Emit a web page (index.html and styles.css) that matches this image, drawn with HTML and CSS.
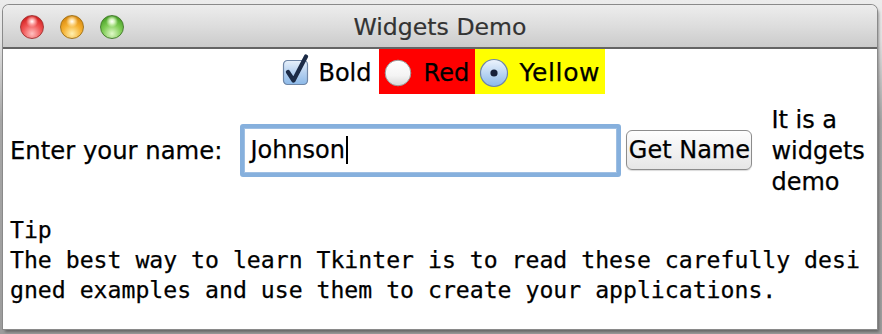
FILE: index.html
```html
<!DOCTYPE html>
<html>
<head>
<meta charset="utf-8">
<title>Widgets Demo</title>
<link rel="stylesheet" href="styles.css">
</head>
<body>
<div class="window">
  <div class="titlebar">
    <div class="lights">
      <span class="light red"></span>
      <span class="light orange"></span>
      <span class="light green"></span>
    </div>
    <div class="title">Widgets Demo</div>
  </div>
  <div class="content">
    <div class="row1">
      <label class="opt opt-bold">
        <svg class="check" width="28" height="32" viewBox="0 0 28 32">
          <defs>
            <linearGradient id="cbg" x1="0" y1="0" x2="0" y2="1">
              <stop offset="0" stop-color="#e8f1fb"/>
              <stop offset="0.5" stop-color="#b6d1f0"/>
              <stop offset="1" stop-color="#8cb9e8"/>
            </linearGradient>
          </defs>
          <rect x="1.5" y="6.5" width="24" height="24" rx="4" fill="url(#cbg)" stroke="#6f86a6" stroke-width="1.2"/>
          <path d="M6 18 L11.5 26.5 L24 2.5" fill="none" stroke="#1c2b46" stroke-width="4.2" stroke-linecap="round" stroke-linejoin="round"/>
        </svg>
        <span class="opt-text">Bold</span>
      </label>
      <label class="opt opt-red">
        <svg class="radio" width="28" height="28" viewBox="0 0 28 28">
          <defs>
            <linearGradient id="rw" x1="0" y1="0" x2="0" y2="1">
              <stop offset="0" stop-color="#ffffff"/>
              <stop offset="0.6" stop-color="#f4f4f4"/>
              <stop offset="1" stop-color="#d8d8d8"/>
            </linearGradient>
          </defs>
          <circle cx="14" cy="14" r="12.8" fill="url(#rw)" stroke="#9a9a9a" stroke-width="1"/>
        </svg>
        <span class="opt-text">Red</span>
      </label>
      <label class="opt opt-yellow">
        <svg class="radio" width="30" height="30" viewBox="0 0 30 30">
          <defs>
            <linearGradient id="rb" x1="0" y1="0" x2="0" y2="1">
              <stop offset="0" stop-color="#eef5fd"/>
              <stop offset="0.5" stop-color="#bcd6f2"/>
              <stop offset="1" stop-color="#8ab8ea"/>
            </linearGradient>
          </defs>
          <circle cx="15" cy="15" r="13.5" fill="url(#rb)" stroke="#6f86a6" stroke-width="1.2"/>
          <circle cx="15" cy="15" r="3.6" fill="#15203a"/>
        </svg>
        <span class="opt-text yellow-text">Yellow</span>
      </label>
    </div>
    <div class="row2">
      <span class="prompt">Enter your name:</span>
      <div class="entry"><span class="entry-text">Johnson</span><span class="caret"></span></div>
      <button class="btn">Get Name</button>
      <div class="message">It is a<br>widgets<br>demo</div>
    </div>
    <div class="textbox">Tip
The best way to learn Tkinter is to read these carefully desi
gned examples and use them to create your applications.</div>
  </div>
</div>
</body>
</html>
```

FILE: styles.css
```css
html, body {
  margin: 0;
  padding: 0;
}
body {
  width: 882px;
  height: 334px;
  overflow: hidden;
  background: linear-gradient(#ececec 0, #e2e2e2 40px, #a6a6a6 120px, #9c9c9c 100%);
  font-family: "DejaVu Sans", "Open Sans", sans-serif;
  color: #000;
}
.window {
  margin: 5px 5px 0 3px;
  width: 874px;
  height: 324px;
  display: flex;
  flex-direction: column;
  border-radius: 6px 6px 0 0;
  box-shadow: 0 0 0 1px #8a8a8a, 2px 3px 3px rgba(0,0,0,0.35);
  overflow: hidden;
  background: #fff;
}
.titlebar {
  height: 42px;
  flex: none;
  display: flex;
  align-items: center;
  position: relative;
  background: linear-gradient(#ededed, #dddddd 50%, #cbcbcb);
  border-bottom: 2px solid #646464;
}
.lights {
  display: flex;
  gap: 16px;
  padding-left: 17px;
  padding-top: 2px;
}
.light {
  width: 24px;
  height: 24px;
  border-radius: 50%;
  box-sizing: border-box;
}
.light.red {
  background: radial-gradient(circle at 50% 25%, #fff 0, #ffb0b0 12%, transparent 30%), radial-gradient(circle at 50% 80%, #ffc0c0 0, #f05555 45%, #d42020 80%);
  border: 1px solid #a53a3a;
}
.light.orange {
  background: radial-gradient(circle at 50% 25%, #fff 0, #ffe0a0 12%, transparent 30%), radial-gradient(circle at 50% 80%, #fff0b0 0, #f5b030 45%, #d98a10 80%);
  border: 1px solid #a3761e;
}
.light.green {
  background: radial-gradient(circle at 50% 25%, #fff 0, #d8f5c0 12%, transparent 30%), radial-gradient(circle at 50% 80%, #e0f8c8 0, #7fcc55 45%, #4aa228 80%);
  border: 1px solid #4a7f33;
}
.title {
  position: absolute;
  left: 0;
  right: 0;
  top: 0;
  bottom: 0;
  display: flex;
  align-items: center;
  justify-content: center;
  font-size: 23.6px;
  color: #333;
  padding-top: 1px;
  -webkit-text-stroke: 0.2px #333;
}
.content {
  flex: 1;
  display: flex;
  flex-direction: column;
  -webkit-text-stroke: 0.25px #000;
}
.row1 {
  display: flex;
  justify-content: center;
  height: 46px;
  padding-left: 3px;
}
.opt {
  display: flex;
  align-items: center;
  font-size: 24px;
  height: 45px;
  padding-top: 2px;
  box-sizing: border-box;
}
.opt-bold {
  padding-left: 4px;
  padding-right: 7px;
}
.check {
  margin-top: -6px;
  margin-right: 8px;
}
.opt-red {
  background: #ff0000;
  width: 96px;
  padding-left: 5px;
}
.opt-red .radio {
  margin-right: 12px;
}
.opt-yellow {
  background: #ffff00;
  width: 130px;
  padding-left: 4px;
}
.opt-yellow .radio {
  margin-right: 11px;
}
.yellow-text {
  font-size: 25px;
  letter-spacing: 0.6px;
}
.row2 {
  display: flex;
  align-items: center;
  height: 110px;
  padding-left: 7px;
}
.prompt {
  font-size: 24.3px;
  margin-right: 18px;
}
.entry {
  width: 381px;
  height: 53px;
  box-sizing: border-box;
  border: 4px solid #86b0dd;
  border-radius: 3px;
  box-shadow: inset 0 0 0 1px #9fbfe3;
  display: flex;
  align-items: center;
  padding-left: 6px;
  font-size: 24px;
}
.caret {
  width: 2px;
  height: 28px;
  background: #000;
  margin-left: 1px;
}
.btn {
  margin-left: 5px;
  width: 126px;
  height: 40px;
  border: 1px solid #8c8c8c;
  border-radius: 6px;
  background: linear-gradient(#fdfdfd, #f2f2f2 50%, #e6e6e6);
  font-family: "DejaVu Sans", "Open Sans", sans-serif;
  font-size: 24px;
  color: #000;
  padding: 0;
  box-shadow: 0 1px 1px rgba(0,0,0,0.15);
  -webkit-text-stroke: 0.25px #000;
}
.message {
  margin-left: 19px;
  font-size: 24px;
  line-height: 31px;
  padding-top: 2px;
}
.textbox {
  font-family: "DejaVu Sans Mono", "Liberation Mono", monospace;
  font-size: 23.15px;
  line-height: 30px;
  white-space: pre;
  padding-left: 7px;
  padding-top: 10px;
}
```
